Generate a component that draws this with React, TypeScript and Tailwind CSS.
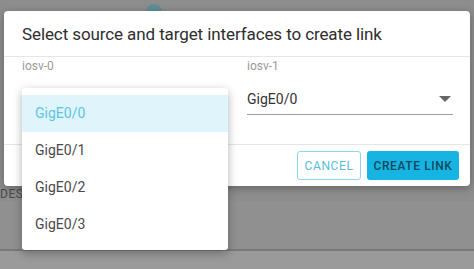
import React from "react";

const font = { fontFamily: "Roboto, 'Open Sans', Arial, sans-serif" };

export default function App() {
  const items = ["GigE0/0", "GigE0/1", "GigE0/2", "GigE0/3"];
  return (
    <div
      className="relative w-[474px] h-[269px] overflow-hidden bg-[#8d8d8d]"
      style={font}
    >
      {/* page behind overlay */}
      <div className="absolute left-[146px] top-[4px] w-[16px] h-[16px] rounded-full bg-[#5f8e98]" />
      <div className="flex flex-col pt-[187px]">
        <div className="h-[14px] text-[12px] leading-[14px] text-[#4a4a4a] tracking-[0.5px]">
          DES
        </div>
        <div className="h-[48px] bg-[#909090]" />
        <div className="h-[2px] bg-[#7a7a7a]" />
        <div className="h-[18px] bg-[#9a9a9a]" />
      </div>

      {/* dialog */}
      <div className="absolute left-[4px] top-[11px] w-[466px] h-[175px] rounded-[4px] bg-white shadow-[0_2px_8px_rgba(0,0,0,0.3)] flex flex-col">
        <div className="h-[46px] flex items-center pl-[18px] border-b border-[#e6e6e6]">
          <span className="text-[17px] leading-[24px] text-[#2e2e2e] tracking-[-0.1px]">
            Select source and target interfaces to create link
          </span>
        </div>
        <div className="h-[88px] grid grid-cols-[206px_206px] gap-x-[19px] pl-[18px] border-b border-[#e6e6e6]">
          <div className="flex flex-col">
            <div className="mt-[1px] text-[12px] leading-[16px] text-[#9a9a9a]">iosv-0</div>
          </div>
          <div className="flex flex-col">
            <div className="mt-[1px] text-[12px] leading-[16px] text-[#9a9a9a]">iosv-1</div>
            <div className="mt-[12px] h-[29px] flex items-center justify-between border-b border-[#9e9e9e]">
              <span className="text-[14px] leading-[18px] text-[#333] -mt-[2px]">GigE0/0</span>
              <svg width="12" height="6" viewBox="0 0 12 6" className="mr-[2px] -mt-[2px]">
                <path d="M0 0 L12 0 L6 6 Z" fill="#666" />
              </svg>
            </div>
          </div>
        </div>
        <div className="flex-1 flex items-center justify-end gap-[6px] pr-[11px]">
          <button className="h-[29px] w-[64px] rounded-[3px] border border-[#8fd7e8] text-[12px] tracking-[0.6px] text-[#55bfd8] bg-white">
            CANCEL
          </button>
          <button className="h-[29px] w-[92px] rounded-[3px] bg-[#16b4e2] text-[12px] tracking-[0.6px] text-[#14485c] font-medium">
            CREATE LINK
          </button>
        </div>
      </div>

      {/* dropdown menu */}
      <div className="absolute left-[22px] top-[88px] w-[206px] rounded-[3px] bg-white py-[7px] shadow-[0_3px_10px_rgba(0,0,0,0.3)] flex flex-col">
        {items.map((it, i) => (
          <div
            key={it}
            className={
              i === 0
                ? "h-[37px] flex items-center pl-[13px] bg-[#dff5fb] text-[#5cc6e2] text-[14px]"
                : "h-[37px] flex items-center pl-[13px] text-[#4a4a4a] text-[14px]"
            }
          >
            {it}
          </div>
        ))}
      </div>
    </div>
  );
}
